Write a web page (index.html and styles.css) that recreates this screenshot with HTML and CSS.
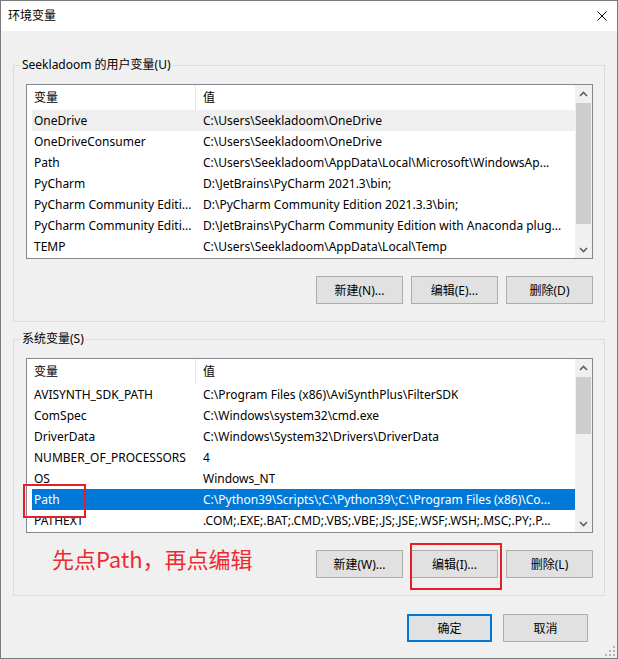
FILE: index.html
```html
<!DOCTYPE html>
<html lang="zh-CN">
<head>
<meta charset="utf-8">
<title>环境变量</title>
<link rel="stylesheet" href="styles.css">
</head>
<body>
<div class="window">
  <div class="titlebar">
    <span class="title">环境变量</span>
    <svg class="close" width="10" height="10" viewBox="0 0 10 10"><path d="M0.5 0.5L9.5 9.5M9.5 0.5L0.5 9.5" stroke="#000" stroke-width="1" fill="none"/></svg>
  </div>
  <div class="content">
    <div class="group">
      <div class="legend">Seekladoom 的用户变量(U)</div>
      <div class="list">
        <div class="table">
          <div class="thead"><div class="th name">变量</div><div class="th val">值</div></div>
          <div class="row hover"><div class="name">OneDrive</div><div class="val">C:\Users\Seekladoom\OneDrive</div></div>
          <div class="row"><div class="name">OneDriveConsumer</div><div class="val">C:\Users\Seekladoom\OneDrive</div></div>
          <div class="row"><div class="name">Path</div><div class="val">C:\Users\Seekladoom\AppData\Local\Microsoft\WindowsAp...</div></div>
          <div class="row"><div class="name">PyCharm</div><div class="val">D:\JetBrains\PyCharm 2021.3\bin;</div></div>
          <div class="row"><div class="name">PyCharm Community Editi...</div><div class="val">D:\PyCharm Community Edition 2021.3.3\bin;</div></div>
          <div class="row"><div class="name">PyCharm Community Editi...</div><div class="val">D:\JetBrains\PyCharm Community Edition with Anaconda plug...</div></div>
          <div class="row"><div class="name">TEMP</div><div class="val">C:\Users\Seekladoom\AppData\Local\Temp</div></div>
        </div>
        <div class="sb">
          <div class="arr"><svg width="9" height="6" viewBox="0 0 9 6"><path d="M1 5L4.5 1.5L8 5" stroke="#606060" stroke-width="1.6" fill="none"/></svg></div>
          <div class="track"><div class="thumb thumb-u"></div></div>
          <div class="arr"><svg width="9" height="6" viewBox="0 0 9 6"><path d="M1 1L4.5 4.5L8 1" stroke="#606060" stroke-width="1.6" fill="none"/></svg></div>
        </div>
      </div>
      <div class="btns">
        <button class="btn">新建(N)...</button>
        <button class="btn">编辑(E)...</button>
        <button class="btn">删除(D)</button>
      </div>
    </div>

    <div class="group">
      <div class="legend">系统变量(S)</div>
      <div class="list">
        <div class="table">
          <div class="thead"><div class="th name">变量</div><div class="th val">值</div></div>
          <div class="row"><div class="name">AVISYNTH_SDK_PATH</div><div class="val">C:\Program Files (x86)\AviSynthPlus\FilterSDK</div></div>
          <div class="row"><div class="name">ComSpec</div><div class="val">C:\Windows\system32\cmd.exe</div></div>
          <div class="row"><div class="name">DriverData</div><div class="val">C:\Windows\System32\Drivers\DriverData</div></div>
          <div class="row"><div class="name">NUMBER_OF_PROCESSORS</div><div class="val">4</div></div>
          <div class="row"><div class="name">OS</div><div class="val">Windows_NT</div></div>
          <div class="row selected"><div class="name">Path</div><div class="val">C:\Python39\Scripts\;C:\Python39\;C:\Program Files (x86)\Co...</div></div>
          <div class="row"><div class="name">PATHEXT</div><div class="val">.COM;.EXE;.BAT;.CMD;.VBS;.VBE;.JS;.JSE;.WSF;.WSH;.MSC;.PY;.P...</div></div>
        </div>
        <div class="sb">
          <div class="arr"><svg width="9" height="6" viewBox="0 0 9 6"><path d="M1 5L4.5 1.5L8 5" stroke="#606060" stroke-width="1.6" fill="none"/></svg></div>
          <div class="track"><div class="thumb thumb-s"></div></div>
          <div class="arr"><svg width="9" height="6" viewBox="0 0 9 6"><path d="M1 1L4.5 4.5L8 1" stroke="#606060" stroke-width="1.6" fill="none"/></svg></div>
        </div>
      </div>
      <div class="btns">
        <button class="btn">新建(W)...</button>
        <button class="btn">编辑(I)...</button>
        <button class="btn">删除(L)</button>
      </div>
    </div>

    <div class="footer">
      <button class="btn primary">确定</button>
      <button class="btn">取消</button>
    </div>
  </div>

  <div class="note">先点Path，再点编辑</div>
  <div class="mark mark-path"></div>
  <div class="mark mark-edit"></div>
  <svg class="grip" width="12" height="12" viewBox="0 0 12 12">
    <rect x="9" y="1" width="2" height="2" fill="#b4b4b4"/>
    <rect x="5" y="5" width="2" height="2" fill="#b4b4b4"/>
    <rect x="9" y="5" width="2" height="2" fill="#b4b4b4"/>
    <rect x="1" y="9" width="2" height="2" fill="#b4b4b4"/>
    <rect x="5" y="9" width="2" height="2" fill="#b4b4b4"/>
    <rect x="9" y="9" width="2" height="2" fill="#b4b4b4"/>
  </svg>
</div>
</body>
</html>
```

FILE: styles.css
```css
* { box-sizing: border-box; }

body {
  margin: 0;
  font-family: "Noto Sans", "Noto Sans CJK SC", sans-serif;
  font-size: 12px;
  color: #000;
}

.window {
  position: relative;
  width: 618px;
  height: 659px;
  border: 1px solid #7a7a7a;
  background: #f0f0f0;
  display: flex;
  flex-direction: column;
}

.titlebar {
  height: 30px;
  flex: none;
  background: #fff;
  display: flex;
  align-items: center;
  justify-content: space-between;
  padding: 0 10px 0 7px;
}

.title { line-height: 30px; }

.close { display: block; }

.content {
  padding: 34px 12px 0 12px;
}

.group {
  border: 1px solid #dcdcdc;
  padding: 0 11px 17px 12px;
}

.group + .group { margin-top: 17px; }

.legend {
  width: max-content;
  margin: -9px 0 0 -6px;
  padding: 0 2px;
  line-height: 16px;
  background: #f0f0f0;
}

.list {
  margin-top: 11px;
  height: 175px;
  border: 1px solid #828790;
  background: #fff;
  display: flex;
}

.table {
  flex: 1;
  min-width: 0;
  overflow: hidden;
}

.thead {
  display: flex;
  height: 25px;
}

.th {
  line-height: 25px;
  padding-left: 7px;
}

.th.name {
  width: 169px;
  border-right: 1px solid #e5e5e5;
}

.row {
  display: flex;
  height: 21px;
  line-height: 21px;
  margin-left: 5px;
  white-space: nowrap;
}

.row .name {
  width: 164px;
  flex: none;
  padding-left: 2px;
  overflow: hidden;
}

.row .val {
  padding-left: 7px;
  overflow: hidden;
}

.row.hover { background: #efefef; }

.row.selected {
  background: #0078d7;
  color: #fff;
}

.sb {
  width: 17px;
  flex: none;
  background: #f0f0f0;
  display: flex;
  flex-direction: column;
}

.arr {
  height: 17px;
  flex: none;
  display: flex;
  align-items: center;
  justify-content: center;
}

.track {
  flex: 1;
  padding: 0 1px;
}

.thumb { background: #cdcdcd; }

.thumb-u { height: 121px; margin-top: 1px; }

.thumb-s { height: 57px; margin-top: 1px; }

.btns {
  display: flex;
  justify-content: flex-end;
  gap: 8px;
  margin-top: 17px;
}

.btn {
  width: 87px;
  height: 28px;
  padding: 0;
  border: 1px solid #adadad;
  background: #e1e1e1;
  font-family: "Noto Sans", "Noto Sans CJK SC", sans-serif;
  font-size: 12px;
  color: #000;
}

.footer {
  display: flex;
  justify-content: flex-end;
  gap: 11px;
  margin-top: 18px;
  padding-right: 17px;
}

.footer .btn { width: 85px; }

.btn.primary { border: 2px solid #0078d7; }

.note {
  position: absolute;
  left: 51px;
  top: 543px;
  font-family: "Noto Sans CJK SC", sans-serif;
  font-size: 22px;
  line-height: 28px;
  color: #ee2a30;
  white-space: nowrap;
}

.mark {
  position: absolute;
  border: 2px solid #e81d25;
}

.mark-path {
  left: 22px;
  top: 483px;
  width: 63px;
  height: 34px;
}

.mark-edit {
  left: 409px;
  top: 542px;
  width: 92px;
  height: 47px;
}

.grip {
  position: absolute;
  right: 1px;
  bottom: 1px;
}
```
